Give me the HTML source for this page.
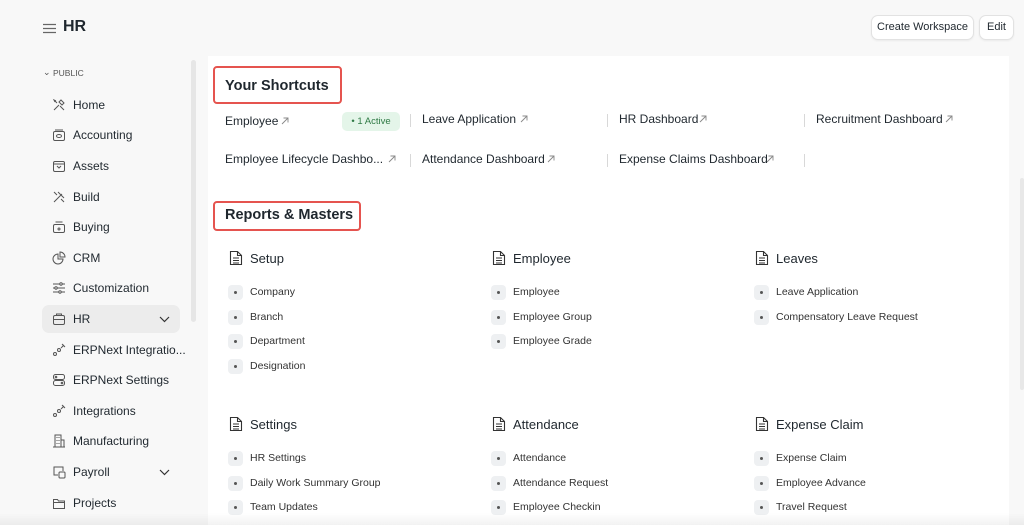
<!DOCTYPE html>
<html><head><meta charset="utf-8"><style>
*{box-sizing:border-box;margin:0;padding:0}
html,body{width:1024px;height:525px;overflow:hidden}
body{background:#f8f8f8;font-family:"Liberation Sans",sans-serif;color:#1f272e;position:relative}
.a{position:absolute;white-space:nowrap}
.si{font-size:12px;color:#1f272e}
.ic{position:absolute;width:14px;height:14px}
.btn{position:absolute;top:15px;height:25px;border:1px solid #e2e2e2;border-radius:7px;background:#fff;font-size:11px;line-height:23px;text-align:center;box-shadow:0 1px 2px rgba(0,0,0,.06)}
.main{position:absolute;left:208px;top:56px;width:801px;height:469px;background:#fff}
.hl{position:absolute;border:2.5px solid #e5544f;border-radius:4px}
.sc{font-size:12px;color:#1f272e}
.ar{position:absolute;width:8px;height:8px}
.sep{position:absolute;width:1px;height:13px;background:#d8d8d8}
.ch{font-size:13px;color:#1f272e}
.li{font-size:10.5px;color:#333}
.bl{position:absolute;width:15px;height:15px;border-radius:4px;background:#eef0f2}
.bl:after{content:"";position:absolute;left:6px;top:6px;width:3px;height:3px;border-radius:50%;background:#555}
</style></head><body>
<svg width="0" height="0" style="position:absolute"><defs>
<symbol id="doc" viewBox="0 0 14 16"><path d="M1.5 1.5h7l4 4v9h-11z M8.5 1.5v4h4 M4 8h6M4 10.5h6M4 13h6" fill="none" stroke="#333" stroke-width="1.1"/></symbol>
<symbol id="arr" viewBox="0 0 8 8"><path d="M1 7L7 1M2.5 1H7v4.5" fill="none" stroke="#888" stroke-width="0.9"/></symbol>
</defs></svg>
<!-- header -->
<svg class="a" style="left:43px;top:23px" width="13" height="11" viewBox="0 0 13 11"><path d="M0 1.5H13M0 5.5H13M0 9.5H13" stroke="#666" stroke-width="1.3"/></svg>
<div class="a" style="left:63px;top:18px;font-size:16px;font-weight:bold">HR</div>
<div class="btn" style="left:871px;width:103px">Create Workspace</div>
<div class="btn" style="left:979px;width:35px">Edit</div>

<!-- sidebar -->
<div class="a" style="left:43px;top:67px;font-size:9px;color:#555">&#8964;</div>
<div class="a" style="left:53px;top:68px;font-size:8.5px;color:#555">PUBLIC</div>
<div class="a" style="left:191px;top:60px;width:5px;height:262px;border-radius:3px;background:#e6e6e6"></div>
<div class="a" style="left:42px;top:305px;width:138px;height:28px;border-radius:7px;background:#ececec"></div>

<svg class="ic" style="left:52px;top:98px" viewBox="0 0 14 14" fill="none" stroke="#555" stroke-width="1"><path d="M2 12L7 7M9 2l3 3-2 2-3-3zM2 2l3 3M12 12L8 8M3 4l-1-2 2 1"/></svg>
<div class="a si" style="left:73px;top:98px">Home</div>
<svg class="ic" style="left:52px;top:128px" viewBox="0 0 14 14" fill="none" stroke="#555" stroke-width="1"><rect x="1.5" y="3.5" width="11" height="9" rx="1.5"/><path d="M3 2h8"/><ellipse cx="7" cy="8" rx="2.5" ry="1.5"/></svg>
<div class="a si" style="left:73px;top:128px">Accounting</div>
<svg class="ic" style="left:52px;top:159px" viewBox="0 0 14 14" fill="none" stroke="#555" stroke-width="1"><rect x="1.5" y="2.5" width="11" height="10" rx="1.5"/><path d="M1.5 5h11M5 7l2 2 2-2"/></svg>
<div class="a si" style="left:73px;top:159px">Assets</div>
<svg class="ic" style="left:52px;top:190px" viewBox="0 0 14 14" fill="none" stroke="#555" stroke-width="1"><path d="M2 12L10 4M6 2l6 6M2 2l3 3M9 9l3 3"/></svg>
<div class="a si" style="left:73px;top:190px">Build</div>
<svg class="ic" style="left:52px;top:220px" viewBox="0 0 14 14" fill="none" stroke="#555" stroke-width="1"><rect x="1.5" y="4.5" width="11" height="8" rx="1.5"/><path d="M3.5 2h7"/><circle cx="7" cy="9" r="1"/></svg>
<div class="a si" style="left:73px;top:220px">Buying</div>
<svg class="ic" style="left:52px;top:251px" viewBox="0 0 14 14" fill="none" stroke="#555" stroke-width="1"><path d="M6 3a5 5 0 1 0 5 5H6z"/><path d="M8 1v5h5a5 5 0 0 0-5-5z"/></svg>
<div class="a si" style="left:73px;top:251px">CRM</div>
<svg class="ic" style="left:52px;top:281px" viewBox="0 0 14 14" fill="none" stroke="#555" stroke-width="1"><path d="M1 3h12M1 7h12M1 11h12"/><circle cx="9" cy="3" r="1.2" fill="#fff"/><circle cx="4" cy="7" r="1.2" fill="#fff"/><circle cx="8" cy="11" r="1.2" fill="#fff"/></svg>
<div class="a si" style="left:73px;top:281px">Customization</div>
<svg class="ic" style="left:52px;top:312px" viewBox="0 0 14 14" fill="none" stroke="#555" stroke-width="1"><rect x="1.5" y="3.5" width="11" height="9" rx="1.5"/><path d="M4.5 3.5V2h5v1.5M1.5 7.5h11"/></svg>
<div class="a si" style="left:73px;top:312px">HR</div>
<svg class="a" style="left:159px;top:316px" width="11" height="7" viewBox="0 0 11 7"><path d="M1 1l4.5 4.5L10 1" stroke="#333" fill="none" stroke-width="1.2"/></svg>
<svg class="ic" style="left:52px;top:343px" viewBox="0 0 14 14" fill="none" stroke="#555" stroke-width="1"><circle cx="3" cy="11" r="1.5"/><circle cx="7" cy="7" r="1.5"/><path d="M9 5l3-3M10 1l3 3"/></svg>
<div class="a si" style="left:73px;top:343px">ERPNext Integratio...</div>
<svg class="ic" style="left:52px;top:373px" viewBox="0 0 14 14" fill="none" stroke="#555" stroke-width="1"><rect x="1.5" y="1.5" width="11" height="5" rx="2"/><rect x="1.5" y="7.5" width="11" height="5" rx="2"/><circle cx="4" cy="4" r=".8"/><circle cx="10" cy="10" r=".8"/></svg>
<div class="a si" style="left:73px;top:373px">ERPNext Settings</div>
<svg class="ic" style="left:52px;top:404px" viewBox="0 0 14 14" fill="none" stroke="#555" stroke-width="1"><circle cx="3" cy="11" r="1.5"/><circle cx="7" cy="7" r="1.5"/><path d="M9 5l3-3M10 1l3 3"/></svg>
<div class="a si" style="left:73px;top:404px">Integrations</div>
<svg class="ic" style="left:52px;top:434px" viewBox="0 0 14 14" fill="none" stroke="#555" stroke-width="1"><path d="M1 13h12M3 13V1h6v12M9 6h3v7M5 3v1M7 3v1M5 6v1M7 6v1M5 9v1M7 9v1"/></svg>
<div class="a si" style="left:73px;top:434px">Manufacturing</div>
<svg class="ic" style="left:52px;top:465px" viewBox="0 0 14 14" fill="none" stroke="#555" stroke-width="1"><path d="M6 10H2V2h9v4"/><rect x="7" y="7" width="6" height="6" rx="1"/></svg>
<div class="a si" style="left:73px;top:465px">Payroll</div>
<svg class="a" style="left:159px;top:469px" width="11" height="7" viewBox="0 0 11 7"><path d="M1 1l4.5 4.5L10 1" stroke="#333" fill="none" stroke-width="1.2"/></svg>
<svg class="ic" style="left:52px;top:496px" viewBox="0 0 14 14" fill="none" stroke="#555" stroke-width="1"><path d="M1.5 3.5h4l1 1.5h6v7.5h-11zM1.5 6.5h11"/></svg>
<div class="a si" style="left:73px;top:496px">Projects</div>

<!-- main -->
<div class="main"></div>
<div class="a" style="left:1020px;top:178px;width:4px;height:212px;background:#e8e8e8;border-radius:2px"></div>

<div class="hl" style="left:213px;top:66px;width:129px;height:38px"></div>
<div class="a" style="left:225px;top:78px;font-size:14.5px;font-weight:bold">Your Shortcuts</div>

<div class="a sc" style="left:225px;top:114px">Employee</div><svg class="ar" style="left:281px;top:117px"><use href="#arr"/></svg>
<div class="a" style="left:342px;top:112px;width:58px;height:19px;border-radius:5px;background:#e4f5e9;color:#2f7a45;font-size:9.5px;line-height:19px;text-align:center">&#8226; 1 Active</div>
<div class="sep" style="left:410px;top:114px"></div>
<div class="a sc" style="left:422px;top:112px">Leave Application</div><svg class="ar" style="left:520px;top:115px"><use href="#arr"/></svg>
<div class="sep" style="left:607px;top:114px"></div>
<div class="a sc" style="left:619px;top:112px">HR Dashboard</div><svg class="ar" style="left:699px;top:115px"><use href="#arr"/></svg>
<div class="sep" style="left:804px;top:114px"></div>
<div class="a sc" style="left:816px;top:112px">Recruitment Dashboard</div><svg class="ar" style="left:945px;top:115px"><use href="#arr"/></svg>

<div class="a sc" style="left:225px;top:152px">Employee Lifecycle Dashbo...</div><svg class="ar" style="left:388px;top:155px"><use href="#arr"/></svg>
<div class="sep" style="left:410px;top:154px"></div>
<div class="a sc" style="left:422px;top:152px">Attendance Dashboard</div><svg class="ar" style="left:547px;top:155px"><use href="#arr"/></svg>
<div class="sep" style="left:607px;top:154px"></div>
<div class="a sc" style="left:619px;top:152px">Expense Claims Dashboard</div><svg class="ar" style="left:766px;top:155px"><use href="#arr"/></svg>
<div class="sep" style="left:804px;top:154px"></div>

<div class="hl" style="left:213px;top:201px;width:148px;height:30px"></div>
<div class="a" style="left:225px;top:207px;font-size:14.5px;font-weight:bold">Reports &amp; Masters</div>

<svg class="a" style="left:229px;top:250px" width="14" height="16"><use href="#doc"/></svg>
<div class="a ch" style="left:250px;top:251px">Setup</div>
<div class="bl" style="left:228px;top:285px"></div><div class="a li" style="left:250px;top:286px">Company</div>
<div class="bl" style="left:228px;top:310px"></div><div class="a li" style="left:250px;top:311px">Branch</div>
<div class="bl" style="left:228px;top:334px"></div><div class="a li" style="left:250px;top:335px">Department</div>
<div class="bl" style="left:228px;top:359px"></div><div class="a li" style="left:250px;top:360px">Designation</div>

<svg class="a" style="left:492px;top:250px" width="14" height="16"><use href="#doc"/></svg>
<div class="a ch" style="left:513px;top:251px">Employee</div>
<div class="bl" style="left:491px;top:285px"></div><div class="a li" style="left:513px;top:286px">Employee</div>
<div class="bl" style="left:491px;top:310px"></div><div class="a li" style="left:513px;top:311px">Employee Group</div>
<div class="bl" style="left:491px;top:334px"></div><div class="a li" style="left:513px;top:335px">Employee Grade</div>

<svg class="a" style="left:755px;top:250px" width="14" height="16"><use href="#doc"/></svg>
<div class="a ch" style="left:776px;top:251px">Leaves</div>
<div class="bl" style="left:754px;top:285px"></div><div class="a li" style="left:776px;top:286px">Leave Application</div>
<div class="bl" style="left:754px;top:310px"></div><div class="a li" style="left:776px;top:311px">Compensatory Leave Request</div>

<svg class="a" style="left:229px;top:416px" width="14" height="16"><use href="#doc"/></svg>
<div class="a ch" style="left:250px;top:417px">Settings</div>
<div class="bl" style="left:228px;top:451px"></div><div class="a li" style="left:250px;top:452px">HR Settings</div>
<div class="bl" style="left:228px;top:476px"></div><div class="a li" style="left:250px;top:477px">Daily Work Summary Group</div>
<div class="bl" style="left:228px;top:500px"></div><div class="a li" style="left:250px;top:501px">Team Updates</div>

<svg class="a" style="left:492px;top:416px" width="14" height="16"><use href="#doc"/></svg>
<div class="a ch" style="left:513px;top:417px">Attendance</div>
<div class="bl" style="left:491px;top:451px"></div><div class="a li" style="left:513px;top:452px">Attendance</div>
<div class="bl" style="left:491px;top:476px"></div><div class="a li" style="left:513px;top:477px">Attendance Request</div>
<div class="bl" style="left:491px;top:500px"></div><div class="a li" style="left:513px;top:501px">Employee Checkin</div>

<svg class="a" style="left:755px;top:416px" width="14" height="16"><use href="#doc"/></svg>
<div class="a ch" style="left:776px;top:417px">Expense Claim</div>
<div class="bl" style="left:754px;top:451px"></div><div class="a li" style="left:776px;top:452px">Expense Claim</div>
<div class="bl" style="left:754px;top:476px"></div><div class="a li" style="left:776px;top:477px">Employee Advance</div>
<div class="bl" style="left:754px;top:500px"></div><div class="a li" style="left:776px;top:501px">Travel Request</div>

<div class="a" style="left:0;top:513px;width:1024px;height:12px;background:linear-gradient(rgba(0,0,0,0),rgba(0,0,0,.05))"></div>
</body></html>
